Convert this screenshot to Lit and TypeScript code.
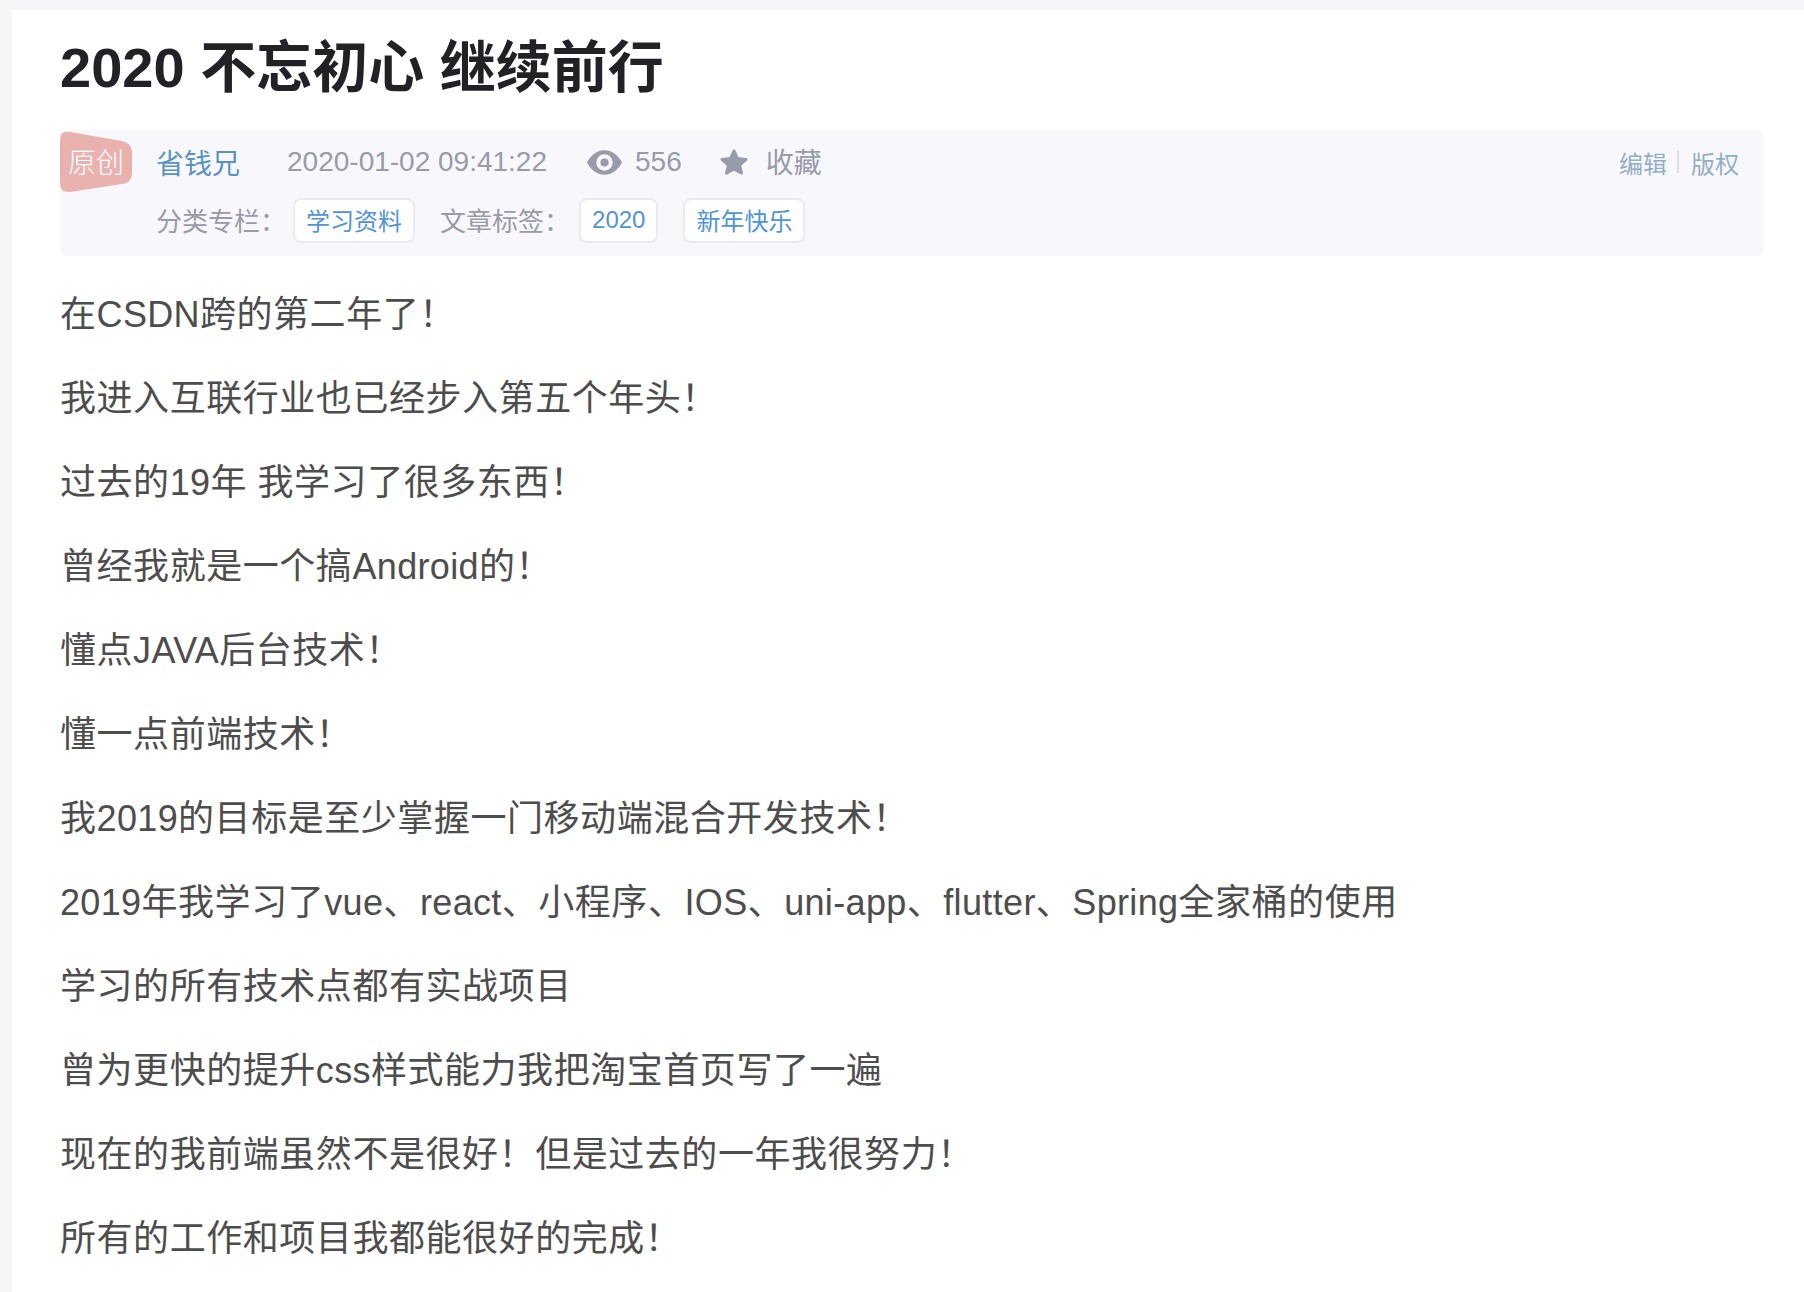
import { LitElement, html, css } from "lit";
import { customElement } from "lit/decorators.js";

const LINES = [
  "在CSDN跨的第二年了！",
  "我进入互联行业也已经步入第五个年头！",
  "过去的19年 我学习了很多东西！",
  "曾经我就是一个搞Android的！",
  "懂点JAVA后台技术！",
  "懂一点前端技术！",
  "我2019的目标是至少掌握一门移动端混合开发技术！",
  "2019年我学习了vue、react、小程序、IOS、uni-app、flutter、Spring全家桶的使用",
  "学习的所有技术点都有实战项目",
  "曾为更快的提升css样式能力我把淘宝首页写了一遍",
  "现在的我前端虽然不是很好！但是过去的一年我很努力！",
  "所有的工作和项目我都能很好的完成！",
];

const runs = (line: string) =>
  line
    .split(/([A-Za-z0-9-]+)/)
    .map((part, i) => (i % 2 ? html`<span class="latin">${part}</span>` : part));

@customElement("app-root")
export class AppRoot extends LitElement {
  static styles = css`
    :host {
      display: block;
      height: 1292px;
      overflow: hidden;
      background: #f5f6f7;
      font-family: "Liberation Sans", "Noto Sans CJK SC", sans-serif;
    }
    .article {
      margin: 10px 0 0 12px;
      padding: 0 40px 0 48px;
      background: #fff;
      height: 1282px;
      overflow: hidden;
    }
    h1 {
      margin: 0;
      padding-top: 24px;
      height: 95px;
      box-sizing: border-box;
      font-size: 56px;
      line-height: 68px;
      font-weight: 700;
      color: #222226;
    }
    .meta {
      display: flex;
      height: 126px;
      margin-top: 25px;
      background: #f8f8fc;
      border-radius: 8px;
    }
    .badge {
      position: relative;
      flex: none;
      width: 72px;
      height: 62px;
      margin-top: 1px;
      padding-bottom: 2px;
      box-sizing: border-box;
      display: flex;
      align-items: center;
      justify-content: center;
      color: #fff;
      font-size: 28px;
      font-weight: 300;
    }
    .badge svg {
      position: absolute;
      inset: 0;
    }
    .badge span {
      position: relative;
    }
    .info {
      flex: 1;
      padding-left: 24px;
      padding-right: 25px;
      display: flex;
      flex-direction: column;
    }
    .row1 {
      display: flex;
      align-items: center;
      height: 62px;
      margin-top: 1px;
      font-size: 28px;
      color: #999aaa;
    }
    .name {
      color: #5893c2;
      margin-right: 47px;
    }
    .time {
      margin-right: 40px;
    }
    .eye {
      margin-right: 13px;
    }
    .views {
      margin-right: 38px;
    }
    .star {
      margin-right: 18px;
    }
    .fav {
      padding-bottom: 2px;
    }
    .actions {
      margin-left: auto;
      display: flex;
      align-items: center;
      font-size: 24px;
      color: #93afc6;
    }
    .sep {
      width: 2px;
      height: 22px;
      margin: 0 12px 0 10px;
      background: #dcdde2;
    }
    .row2 {
      display: flex;
      align-items: center;
      height: 45px;
      margin-top: 5px;
      font-size: 26px;
      color: #999aaa;
    }
    .tag {
      display: flex;
      align-items: center;
      height: 45px;
      padding: 0 11px 2px;
      box-sizing: border-box;
      background: #fff;
      border: 2px solid #eaeaef;
      border-radius: 8px;
      font-size: 24px;
      color: #5094d5;
    }
    .label1 {
      margin-right: 7px;
      padding-bottom: 2px;
    }
    .label2 {
      margin: 0 9px 0 25px;
      padding-bottom: 2px;
    }
    .tag + .tag {
      margin-left: 25px;
    }
    .body {
      padding-top: 29px;
    }
    p {
      margin: 0;
      height: 84px;
      font-size: 36px;
      line-height: 60px;
      letter-spacing: 0.55px;
      color: #4d4d4d;
      white-space: nowrap;
    }
    .latin {
      letter-spacing: 0.35px;
    }
  `;

  render() {
    return html`
      <div class="article">
        <h1>2020 不忘初心 继续前行</h1>
        <div class="meta">
          <div class="badge">
            <svg width="72" height="62" viewBox="0 0 72 62">
              <path
                d="M0 9 Q0 -1 10 1 L62 10 Q72 12 72 22 L72 42 Q72 52 62 53 L10 61 Q0 62 0 52 Z"
                fill="#e9b2ae"
              />
            </svg>
            <span>原创</span>
          </div>
          <div class="info">
            <div class="row1">
              <span class="name">省钱兄</span>
              <span class="time">2020-01-02 09:41:22</span>
              <svg class="eye" width="35" height="25" viewBox="0 0 34 24">
                <path
                  fill="#999aaa"
                  fill-rule="evenodd"
                  d="M17 0C9 0 3 6 0 12c3 6 9 12 17 12s14-6 17-12C31 6 25 0 17 0Zm0 4a8 8 0 1 1 0 16 8 8 0 0 1 0-16Zm0 4a4 4 0 1 0 0 8 4 4 0 0 0 0-8Z"
                />
              </svg>
              <span class="views">556</span>
              <svg class="star" width="28" height="28" viewBox="0 0 30 28">
                <path
                  fill="#999aaa"
                  stroke="#999aaa"
                  stroke-width="3"
                  stroke-linejoin="round"
                  d="M15 2l3.8 8.2 9.2 1-6.8 6.1 1.9 8.7-8.1-4.5L6.9 26l1.9-8.7L2 11.2l9.2-1Z"
                />
              </svg>
              <span class="fav">收藏</span>
              <div class="actions">
                <span>编辑</span><i class="sep"></i><span>版权</span>
              </div>
            </div>
            <div class="row2">
              <span class="label1">分类专栏：</span>
              <span class="tag">学习资料</span>
              <span class="label2">文章标签：</span>
              <span class="tag">2020</span>
              <span class="tag">新年快乐</span>
            </div>
          </div>
        </div>
        <div class="body">
          ${LINES.map((l) => html`<p>${runs(l)}</p>`)}
        </div>
      </div>
    `;
  }
}
